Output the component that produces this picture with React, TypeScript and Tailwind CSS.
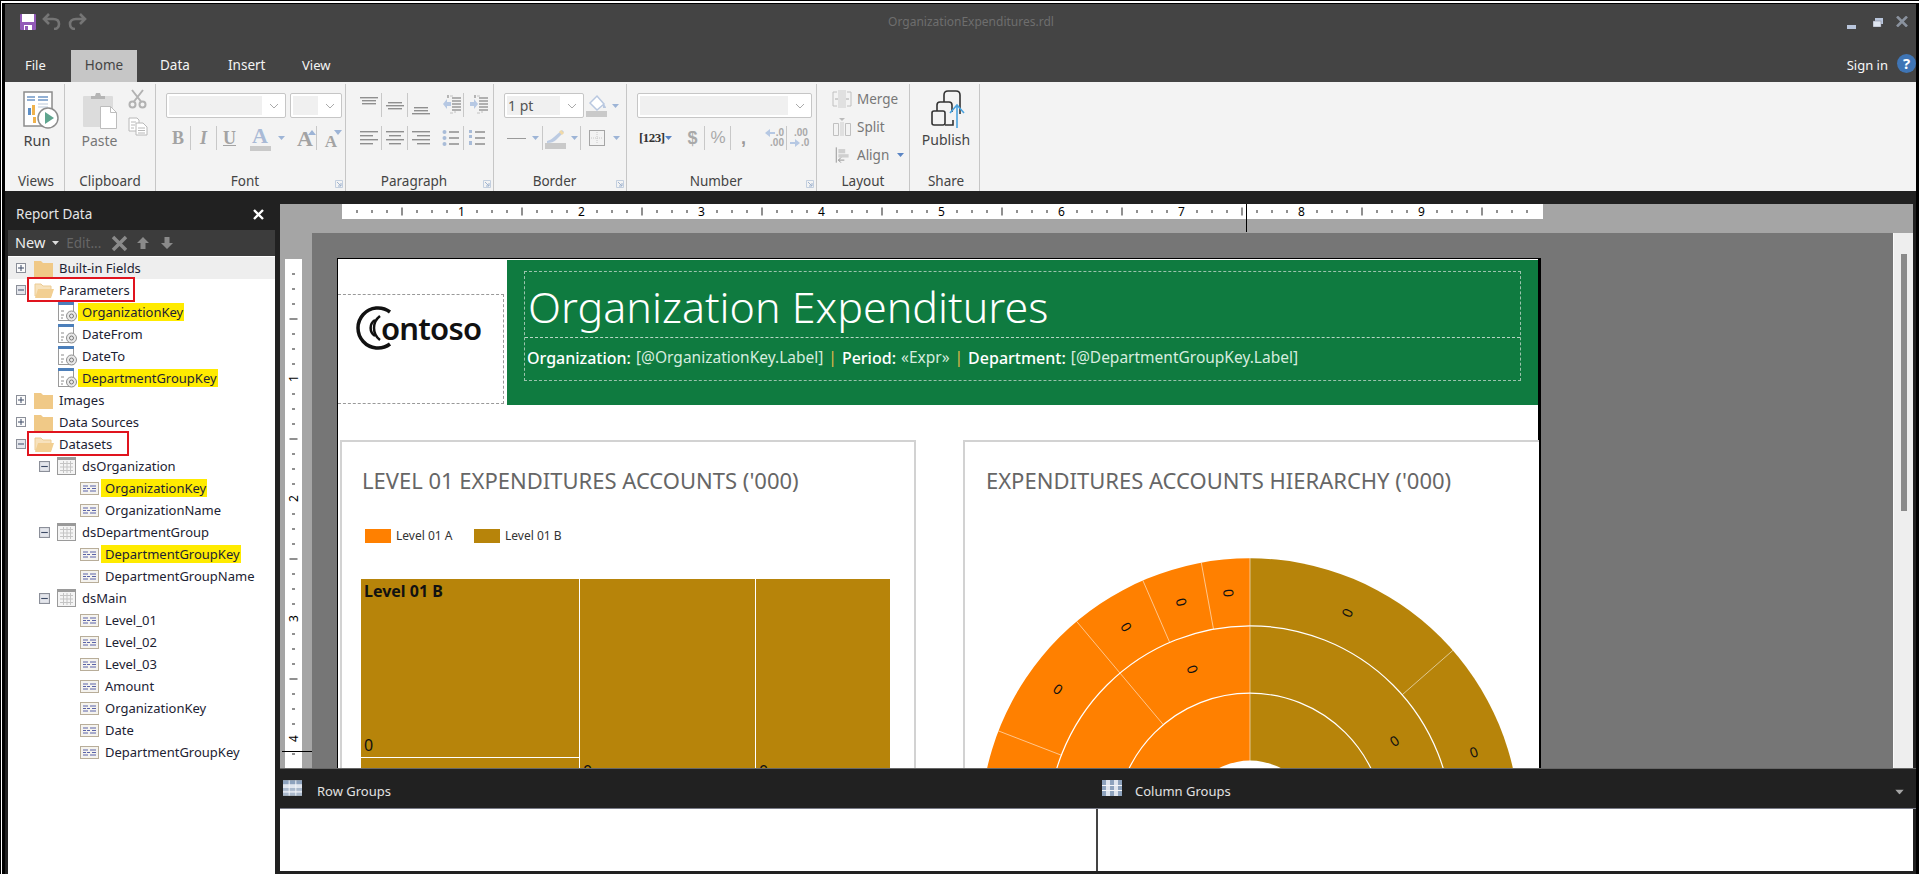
import type { ReactNode } from 'react';

const GRAY = '#8f8f8f';
const BLUE = '#9db4d6';

function Caret({ color = BLUE, className = '' }: { color?: string; className?: string }) {
  return (
    <svg width="7" height="4" viewBox="0 0 7 4" className={className}>
      <path d="M0 0h7L3.5 4z" fill={color} />
    </svg>
  );
}

function Sep({ h = 24 }: { h?: number }) {
  return <div className="w-px shrink-0 bg-[#c8c8c8]" style={{ height: h }} />;
}

// horizontal bars used by all the paragraph glyphs
function Bars({ lines, w = 18, h = 20, color = GRAY }: { lines: [number, number, number][]; w?: number; h?: number; color?: string }) {
  return (
    <svg width={w} height={h} viewBox={`0 0 ${w} ${h}`} className="shrink-0">
      {lines.map(([x1, x2, y], i) => (
        <rect key={i} x={x1} y={y} width={x2 - x1} height="1.4" fill={color} />
      ))}
    </svg>
  );
}

function Combo({ w, inner, children }: { w: number; inner: number; children?: ReactNode }) {
  return (
    <div className="flex h-[25px] items-center rounded-[2px] border border-[#c6c6c6] bg-white pl-[2px]" style={{ width: w }}>
      <div className="flex h-[19px] items-center bg-[#f0f0f0] pl-[1px] text-[14px] leading-none text-[#555]" style={{ width: inner }}>
        {children}
      </div>
      <svg width="10" height="6" viewBox="0 0 10 6" className="ml-auto mr-[6px]">
        <path d="M1 1l4 4 4-4" fill="none" stroke="#aaa" />
      </svg>
    </div>
  );
}

function RibbonGroup({ w, label, launcher, labelClass = '', children }: { w: number; label: string; launcher?: boolean; labelClass?: string; children: ReactNode }) {
  return (
    <div className="relative flex h-full shrink-0 flex-col border-r border-[#c6c6c6]" style={{ width: w }}>
      <div className="h-[87px] shrink-0">{children}</div>
      <div className={`text-center text-[13.5px] leading-[20px] text-[#444] ${launcher ? 'pr-[11px]' : ''} ${labelClass}`}>{label}</div>
      {launcher && (
        <svg width="8" height="8" viewBox="0 0 8 8" className="absolute bottom-[3px] right-[2px]">
          <path d="M0.5 0.5h7v7h-7z" fill="none" stroke="#c3cfdf" />
          <path d="M2 2l4 4M6 3v3H3" fill="none" stroke="#9fb3cf" />
        </svg>
      )}
    </div>
  );
}

function RunIcon() {
  return (
    <svg width="36" height="39" viewBox="0 0 36 39">
      <rect x="1" y="1" width="28" height="34" fill="#fff" stroke="#8c8c8c" strokeWidth="1.5" />
      <path d="M4 6h8M4 9h8M15 6h10M15 9h10" stroke="#6f97c6" strokeWidth="1.4" />
      <path d="M15 13h10M15 16h10" stroke="#b9c8da" strokeWidth="1.2" />
      <rect x="5" y="17" width="3" height="7" fill="#5d8fc7" />
      <rect x="9" y="14" width="3" height="10" fill="#efb24c" />
      <rect x="10" y="26" width="3" height="6" fill="#efb24c" />
      <circle cx="25" cy="27" r="10" fill="#fff" stroke="#8c8c8c" strokeWidth="1.5" />
      <path d="M22 21l9 6-9 6z" fill="#5ea58f" />
    </svg>
  );
}

function PasteIcon() {
  return (
    <svg width="36" height="38" viewBox="0 0 36 38">
      <rect x="1" y="4" width="30" height="31" rx="1" fill="#dcdcdc" />
      <path d="M9 7V4h4l1-3h4l1 3h4v3z" fill="#b5b5b5" />
      <path d="M18.5 14.5h10l6 6v16h-16z" fill="#fff" stroke="#bdbdbd" />
      <path d="M28.5 14.5v6h6" fill="none" stroke="#bdbdbd" />
    </svg>
  );
}

function ScissorsIcon() {
  return (
    <svg width="19" height="20" viewBox="0 0 19 20" fill="none" stroke="#b2b2b2" strokeWidth="2">
      <circle cx="4.5" cy="15.5" r="3" />
      <circle cx="14.5" cy="15.5" r="3" />
      <path d="M6 12.5L15 1M13 12.5L4 1" />
    </svg>
  );
}

function CopyIcon() {
  return (
    <svg width="20" height="19" viewBox="0 0 20 19" fill="#fff" stroke="#b8b8b8">
      <path d="M1 1h8l2 2v11H1z" />
      <path d="M8 6h7l4 4v8H8z" />
      <path d="M3 5h5M3 8h4M3 11h3M10 11h7M10 13.500h7M10 16h7" />
    </svg>
  );
}

function FontA({ size, dir }: { size: number; dir: 'up' | 'down' }) {
  return (
    <div className="relative flex h-[24px] w-[22px] items-end justify-center">
      <span className="font-['Liberation_Serif',serif] font-bold leading-none text-[#a3a3a3]" style={{ fontSize: size }}>
        A
      </span>
      <svg width="8" height="5" viewBox="0 0 8 5" className="absolute right-0 top-[4px]">
        <path d={dir === 'up' ? 'M0 5h8L4 0z' : 'M0 0h8L4 5z'} fill={BLUE} />
      </svg>
    </div>
  );
}

const alignTop: [number, number, number][] = [[0, 18, 2], [2, 16, 5], [2, 16, 8]];
const alignMid: [number, number, number][] = [[2, 16, 7], [0, 18, 10], [2, 16, 13]];
const alignBot: [number, number, number][] = [[2, 16, 12], [2, 16, 15], [0, 18, 18]];
const left: [number, number, number][] = [[0, 18, 3], [0, 13, 7], [0, 18, 11], [0, 13, 15]];
const center: [number, number, number][] = [[0, 18, 3], [3, 15, 7], [0, 18, 11], [3, 15, 15]];
const right: [number, number, number][] = [[0, 18, 3], [5, 18, 7], [0, 18, 11], [5, 18, 15]];

function IndentIcon({ flip }: { flip?: boolean }) {
  return (
    <svg width="20" height="20" viewBox="0 0 20 20">
      <path d={flip ? 'M1 7h4V4l4 5-4 5v-3H1z' : 'M9 7H5V4L1 9l4 5v-3h4z'} fill="#b6c8e3" />
      <path d="M10 3h9M6 0v3M10 6h9M10 9h9M10 12h9M10 15h9" stroke="#9a9a9a" strokeWidth="1.4" />
      <path d="M8 1h3M8 18h3M13 18v-2" stroke="#c2c2c2" />
    </svg>
  );
}

function BulletIcon() {
  return (
    <svg width="18" height="20" viewBox="0 0 18 20">
      <circle cx="2.500" cy="4" r="2" fill="#a9bcd8" />
      <circle cx="2.500" cy="10" r="2" fill="#a9bcd8" />
      <circle cx="2.500" cy="16" r="2" fill="#a9bcd8" />
      <path d="M7 4h10M7 10h10M7 16h10" stroke="#8f8f8f" strokeWidth="1.4" />
    </svg>
  );
}

function NumberedIcon() {
  return (
    <svg width="18" height="20" viewBox="0 0 18 20">
      <path d="M1 2h3v3H1zM1 7h3v3H1zM1 13h3v4H1z" fill="#a9bcd8" />
      <path d="M7 4h10M7 10h10M7 16h10" stroke="#8f8f8f" strokeWidth="1.4" />
    </svg>
  );
}

function SmallArrow({ flip }: { flip?: boolean }) {
  return (
    <svg width="10" height="8" viewBox="0 0 10 8" className="shrink-0">
      <path d={flip ? 'M0 3h5V0l5 4-5 4V5H0z' : 'M10 3H5V0L0 4l5 4V5h5z'} fill="#b6c8e3" />
    </svg>
  );
}

function Ribbon() {
  return (
    <div className="flex h-[109px] shrink-0 bg-[#f3f3f3] pt-[2px]">
      <RibbonGroup w={60} label="Views" labelClass="pl-[3px]">
        <div className="flex flex-col items-center pl-[5px] pt-[7px]">
          <div className="ml-[7px]">
            <RunIcon />
          </div>
          <span className="text-[14.500px] leading-[20px] text-[#444]">Run</span>
        </div>
      </RibbonGroup>
      <RibbonGroup w={91} label="Clipboard">
        <div className="flex pl-[16px] pt-[5px]">
          <div className="flex w-[37px] flex-col items-center pt-[3px]">
            <PasteIcon />
            <span className="mt-px text-[14px] leading-[20px] text-[#777]">Paste</span>
          </div>
          <div className="ml-[10px] flex flex-col gap-[8px]">
            <ScissorsIcon />
            <CopyIcon />
          </div>
        </div>
      </RibbonGroup>
      <RibbonGroup w={190} label="Font" launcher>
        <div className="pl-[10px] pt-[9px]">
          <div className="flex gap-[4px]">
            <Combo w={120} inner={93} />
            <Combo w={52} inner={25} />
          </div>
          <div className="mt-[8px] flex h-[24px] items-center font-['Liberation_Serif',serif] text-[18px] font-bold text-[#a3a3a3]">
            <span className="w-[24px] text-center">B</span>
            <Sep />
            <span className="w-[25px] text-center italic">I</span>
            <Sep />
            <span className="w-[25px] text-center underline">U</span>
            <div className="ml-[2px] flex w-[32px] flex-col items-center">
              <span className="text-[22px] leading-[20px] text-[#a9bad6]">A</span>
              <div className="h-[5px] w-[21px] bg-[#c9c9c9]" />
            </div>
            <Caret className="ml-[2px]" />
            <div className="ml-[9px]">
              <FontA size={22} dir="up" />
            </div>
            <Sep />
            <div className="ml-[3px]">
              <FontA size={17} dir="down" />
            </div>
          </div>
        </div>
      </RibbonGroup>
      <RibbonGroup w={148} label="Paragraph" launcher>
        <div className="flex flex-col gap-[13px] pl-[14px] pt-[11px]">
          <div className="flex h-[20px] items-center">
            <Bars lines={alignTop} />
            <div className="ml-[3px] mr-[4px]"><Sep /></div>
            <Bars lines={alignMid} />
            <div className="ml-[3px] mr-[4px]"><Sep /></div>
            <Bars lines={alignBot} />
            <div className="ml-[12px]"><IndentIcon /></div>
            <div className="ml-[1px] mr-[5px]"><Sep /></div>
            <IndentIcon flip />
          </div>
          <div className="flex h-[20px] items-center">
            <Bars lines={left} />
            <div className="ml-[3px] mr-[4px]"><Sep /></div>
            <Bars lines={center} />
            <div className="ml-[3px] mr-[4px]"><Sep /></div>
            <Bars lines={right} />
            <div className="ml-[12px]"><BulletIcon /></div>
            <div className="ml-[3px] mr-[4px]"><Sep /></div>
            <NumberedIcon />
          </div>
        </div>
      </RibbonGroup>
      <RibbonGroup w={133} label="Border" launcher>
        <div className="pl-[10px] pt-[9px]">
          <div className="flex items-center">
            <Combo w={80} inner={53}>1 pt</Combo>
            <svg width="21" height="23" viewBox="0 0 21 23" className="ml-[2px]">
              <path d="M4 9l7-7 7 8-7 6z" fill="#fff" stroke="#b9c8e0" strokeWidth="1.5" />
              <path d="M17 9c2 2 3 4 3 5h-3z" fill="#b9c8e0" />
              <rect y="17" width="21" height="6" fill="#c9c9c9" />
            </svg>
            <Caret className="ml-[5px]" />
          </div>
          <div className="mt-[8px] flex h-[24px] items-center">
            <div className="ml-[3px] h-px w-[19px] bg-[#9a9a9a]" />
            <Caret className="ml-[6px]" />
            <div className="ml-[3px]"><Sep /></div>
            <svg width="21" height="21" viewBox="0 0 21 21" className="ml-[2px]">
              <path d="M2 13c3-1 5-2 7-4l8-7 2 2-8 8c-2 2-5 3-9 3z" fill="#bccbe2" />
              <path d="M15 3l3 3" stroke="#f0d9a8" strokeWidth="3" />
              <rect y="15" width="21" height="6" fill="#c9c9c9" />
            </svg>
            <Caret className="ml-[5px]" />
            <div className="ml-[2px]"><Sep /></div>
            <svg width="16" height="16" viewBox="0 0 16 16" className="ml-[8px]">
              <rect x="0.5" y="0.5" width="15" height="15" fill="none" stroke="#a5a5a5" />
              <path d="M8 2v12M2 8h12" stroke="#c8c8c8" strokeDasharray="1 1" />
            </svg>
            <Caret className="ml-[8px]" />
          </div>
        </div>
      </RibbonGroup>
      <RibbonGroup w={190} label="Number" launcher>
        <div className="pl-[10px] pt-[9px]">
          <Combo w={175} inner={148} />
          <div className="mt-[8px] flex h-[24px] items-center font-['Liberation_Sans',sans-serif] text-[#a9a9a9]">
            <span className="ml-[2px] w-[24px] text-center font-['Liberation_Serif',serif] text-[13px] font-bold leading-[16px] tracking-[-0.5px] text-[#333]">[123]</span>
            <Caret color="#5a85c4" className="ml-[2px]" />
            <span className="ml-[15px] w-[11px] text-center text-[18px] font-bold">$</span>
            <div className="ml-[6px]"><Sep /></div>
            <span className="ml-[5px] w-[16px] text-center text-[17px]">%</span>
            <div className="ml-[4px]"><Sep /></div>
            <span className="ml-[10px] w-[7px] text-[18px] font-bold leading-[14px] text-[#999]">,</span>
            <div className="ml-[16px] w-[20px] text-right text-[10px] font-bold leading-[10px]">
              <div className="flex items-center justify-end gap-px"><SmallArrow /><span>.0</span></div>
              <div>.00</div>
            </div>
            <div className="ml-[2px]"><Sep /></div>
            <div className="ml-[3px] w-[20px] text-[10px] font-bold leading-[10px]">
              <div className="pl-[4px]">.00</div>
              <div className="flex items-center gap-px"><SmallArrow flip /><span>.0</span></div>
            </div>
          </div>
        </div>
      </RibbonGroup>
      <RibbonGroup w={93} label="Layout">
        <div className="flex flex-col pl-[15px] pt-px text-[13.500px] text-[#777]">
          <div className="flex h-[28px] items-center gap-[5px]">
            <svg width="20" height="20" viewBox="0 0 20 20">
              <rect x="6" y="1" width="8" height="18" fill="#e0e0e0" />
              <path d="M5 3H1v14h4M15 3h4v14h-4" fill="none" stroke="#c0c0c0" />
              <path d="M3 10h3M14 10h3" stroke="#aaa" />
            </svg>
            <span>Merge</span>
          </div>
          <div className="flex h-[28px] items-center gap-[5px]">
            <svg width="20" height="20" viewBox="0 0 20 20">
              <path d="M1.500 6.500h5v12h-5zM13.500 6.500h5v12h-5z" fill="none" stroke="#c0c0c0" />
              <rect x="8" y="5" width="4" height="14" fill="#e0e0e0" />
              <path d="M7 1h6l-3 3z" fill="#bbb" />
            </svg>
            <span>Split</span>
          </div>
          <div className="flex h-[28px] items-center gap-[5px]">
            <svg width="20" height="20" viewBox="0 0 20 20" className="pl-[3px]">
              <path d="M1.500 1v18" stroke="#888" />
              <rect x="4" y="3" width="8" height="5" fill="#cfcfcf" />
              <rect x="4" y="9" width="12" height="4" fill="#cfcfcf" />
              <path d="M11 16H4m3-3l-3 3 3 3" fill="none" stroke="#888" />
            </svg>
            <span>Align</span>
            <Caret color="#5a85c4" className="ml-[3px]" />
          </div>
        </div>
      </RibbonGroup>
      <RibbonGroup w={70} label="Share" labelClass="pl-[3px]">
        <div className="flex flex-col items-center pl-[3px] pt-[6px]">
          <svg width="36" height="39" viewBox="0 0 36 39" fill="none" stroke="#333" strokeWidth="1.6" className="ml-[5px]">
            <path d="M13 12V5q0-4 4-4h8q4 0 4 4v19" />
            <path d="M6 21V15q0-3 3-3h9q3 0 3 3v7" />
            <rect x="1" y="21" width="13" height="14" rx="2" />
            <path d="M14 35h8V30" />
            <path d="M26 38V15M19 23l7-8 7 8" stroke="#4aa3df" />
          </svg>
          <span className="mt-px text-[14px] leading-[20px] text-[#444]">Publish</span>
        </div>
      </RibbonGroup>
    </div>
  );
}

function TitleBar() {
  return (
    <div className="h-[78px] shrink-0 bg-[#444444]">
      <div className="flex h-[46px] items-start">
        <div className="ml-[15px] mt-[9px] flex items-center gap-[6px]">
          <svg width="16" height="16" viewBox="0 0 16 16">
            <rect width="16" height="16" rx="1" fill="#9259b8" />
            <rect x="2" y="0" width="12" height="8" fill="#fff" />
            <rect x="4" y="11" width="8" height="5" fill="#fff" />
            <rect x="5" y="12" width="3" height="4" fill="#9259b8" />
          </svg>
          <svg width="19" height="17" viewBox="0 0 19 17" fill="none" stroke="#757575" strokeWidth="2.6">
            <path d="M7 1L2 6l5 5M2 6h9c4 0 6 2 6 5s-2 5-5 5" />
          </svg>
          <svg width="19" height="17" viewBox="0 0 19 17" fill="none" stroke="#757575" strokeWidth="2.6" className="ml-[1px]">
            <path d="M12 1l5 5-5 5M17 6H8c-4 0-6 2-6 5s2 5 5 5" />
          </svg>
        </div>
        <div className="flex-1 pl-[8px] pt-[10px] text-center text-[12px] leading-[16px] text-[#6e6e6e]">OrganizationExpenditures.rdl</div>
        <div className="mr-[8px] mt-[12px] flex items-start">
          <div className="mt-[9px] h-[4px] w-[9px] bg-[#b9c6dc]" />
          <svg width="10" height="9" viewBox="0 0 10 9" className="ml-[17px] mt-[2px]">
            <rect x="2" width="8" height="6" fill="#b9c6dc" />
            <rect y="3" width="8" height="6" fill="#dfe6f0" stroke="#778" strokeWidth="0.5" />
          </svg>
          <svg width="12" height="11" viewBox="0 0 12 11" className="ml-[13px]">
            <path d="M1 0.500l10 10M11 0.500l-10 10" stroke="#8a929e" strokeWidth="2.600" />
          </svg>
        </div>
      </div>
      <div className="flex h-[32px] text-[13.500px] leading-[30px] text-[#f4f4f4]">
        <span className="ml-[20px] w-[46px] text-[13px]">File</span>
        <span className="w-[66px] bg-[#c6c6c6] text-center text-[#444]">Home</span>
        <span className="ml-[23px] w-[68px]">Data</span>
        <span className="w-[74px]">Insert</span>
        <span className="text-[13px]">View</span>
        <span className="ml-auto text-[13px] text-[#f8f8f8]">Sign in</span>
        <div className="ml-[9px] mt-[4px] flex h-[19px] w-[19px] items-center justify-center rounded-full bg-[#3f75b5] text-[15px] font-bold leading-none text-white">?</div>
      </div>
    </div>
  );
}

function Expander({ open, size = 10 }: { open?: boolean; size?: number }) {
  return (
    <svg width={size} height={size} viewBox="0 0 10 10" className="shrink-0">
      <rect x="0.500" y="0.500" width="9" height="9" fill={open ? '#e4e6ec' : '#fbfbfb'} stroke="#8b8f99" />
      <path d={open ? 'M2 5h6' : 'M2 5h6M5 2v6'} stroke="#3d4b66" />
    </svg>
  );
}

function FolderIcon({ open }: { open?: boolean }) {
  if (open) {
    return (
      <svg width="20" height="18" viewBox="0 0 20 18" className="shrink-0">
        <path d="M1 3h6l2 2h8v10H1z" fill="#f7e2bd" stroke="#eccb94" />
        <path d="M4 8h16l-3 9H1z" fill="#f2cf92" />
      </svg>
    );
  }
  return (
    <svg width="19" height="18" viewBox="0 0 19 18" className="shrink-0">
      <path d="M0 2h7l2 2h10v14H0z" fill="#f0c987" />
    </svg>
  );
}

function ParamIcon() {
  return (
    <svg width="19" height="20" viewBox="0 0 19 20" className="shrink-0">
      <rect x="0.500" y="0.500" width="15" height="18" fill="#fff" stroke="#9a9a9a" />
      <rect x="0" y="0" width="16" height="3" fill="#4c7fba" />
      <path d="M3 9h3M3 13h3M3 16h2" stroke="#8a8a8a" />
      <circle cx="13.500" cy="14" r="5" fill="#e8e8e8" stroke="#8f8f8f" />
      <circle cx="13.500" cy="14" r="2" fill="none" stroke="#777" />
    </svg>
  );
}

function FieldIcon() {
  return (
    <svg width="19" height="13" viewBox="0 0 19 13" className="shrink-0">
      <rect x="0.500" y="0.500" width="18" height="12" fill="#f5f3ee" stroke="#b8ad99" />
      <path d="M3 4h5M10 4h6M3 6.500h3M7 6.500h3M12 6.500h4M3 9h5M10 9h6" stroke="#5b63a8" />
    </svg>
  );
}

function TableIcon() {
  return (
    <svg width="19" height="18" viewBox="0 0 19 18" className="shrink-0">
      <rect width="19" height="18" fill="#9a9a9a" />
      <rect x="1" y="3" width="17" height="14" fill="#f4f4f4" />
      <path d="M3 6.500h13M3 10h13M3 13.500h13M6.500 4v12M10 4v12M13.500 4v12" stroke="#c4c4c4" />
    </svg>
  );
}

type TreeNode = { kind: 'folder' | 'param' | 'dataset' | 'field'; label: string; open?: boolean; mark?: boolean; box?: number; hover?: boolean };

const tree: TreeNode[] = [
  { kind: 'folder', label: 'Built-in Fields', hover: true },
  { kind: 'folder', label: 'Parameters', open: true, box: 108 },
  { kind: 'param', label: 'OrganizationKey', mark: true },
  { kind: 'param', label: 'DateFrom' },
  { kind: 'param', label: 'DateTo' },
  { kind: 'param', label: 'DepartmentGroupKey', mark: true },
  { kind: 'folder', label: 'Images' },
  { kind: 'folder', label: 'Data Sources' },
  { kind: 'folder', label: 'Datasets', open: true, box: 102 },
  { kind: 'dataset', label: 'dsOrganization' },
  { kind: 'field', label: 'OrganizationKey', mark: true },
  { kind: 'field', label: 'OrganizationName' },
  { kind: 'dataset', label: 'dsDepartmentGroup' },
  { kind: 'field', label: 'DepartmentGroupKey', mark: true },
  { kind: 'field', label: 'DepartmentGroupName' },
  { kind: 'dataset', label: 'dsMain' },
  { kind: 'field', label: 'Level_01' },
  { kind: 'field', label: 'Level_02' },
  { kind: 'field', label: 'Level_03' },
  { kind: 'field', label: 'Amount' },
  { kind: 'field', label: 'OrganizationKey' },
  { kind: 'field', label: 'Date' },
  { kind: 'field', label: 'DepartmentGroupKey' },
];

function TreeRow({ node }: { node: TreeNode }) {
  const text = node.mark ? (
    <span className="-ml-[4px] bg-[#ffeb00] pl-[4px] pr-[1px] leading-[15px]">{node.label}</span>
  ) : (
    node.label
  );
  return (
    <div className={`relative flex h-[22px] items-center text-[13px] text-[#1c2233] ${node.hover ? 'bg-[#eeeeee]' : ''}`}>
      {node.kind === 'folder' && (
        <>
          <div className="ml-[8px]"><Expander open={node.open} /></div>
          <div className="ml-[8px]"><FolderIcon open={node.open} /></div>
          <span className={`pt-[2px] ${node.open ? 'ml-[5px]' : 'ml-[6px]'}`}>{text}</span>
        </>
      )}
      {node.kind === 'param' && (
        <>
          <div className="ml-[50px]"><ParamIcon /></div>
          <span className="ml-[5px] pt-[2px]">{text}</span>
        </>
      )}
      {node.kind === 'dataset' && (
        <>
          <div className="ml-[31px]"><Expander open size={11} /></div>
          <div className="ml-[7px]"><TableIcon /></div>
          <span className="ml-[6px] pt-[2px]">{text}</span>
        </>
      )}
      {node.kind === 'field' && (
        <>
          <div className="ml-[72px]"><FieldIcon /></div>
          <span className="ml-[6px] pt-[2px]">{text}</span>
        </>
      )}
      {node.box && (
        <div className="absolute -top-[2px] left-[19px] h-[25px] border-2 border-[#e0141e]" style={{ width: node.box }} />
      )}
    </div>
  );
}

function ReportDataPanel() {
  return (
    <div className="flex w-[275px] shrink-0 flex-col pl-[3px] pr-[5px]">
      <div className="flex h-[39px] shrink-0 items-center justify-between pl-[8px] pr-[11px] pt-[7px] text-[13.500px] text-[#e6e6e6]">
        <span>Report Data</span>
        <svg width="11" height="11" viewBox="0 0 11 11">
          <path d="M1 1l9 9M10 1l-9 9" stroke="#fff" strokeWidth="2.400" />
        </svg>
      </div>
      <div className="flex h-[26px] shrink-0 items-center bg-[#3c3c3c] pl-[7px] text-[#eeeeee]">
        <span className="text-[14.500px]">New</span>
        <Caret color="#ddd" className="ml-[7px]" />
        <span className="ml-[7px] text-[13.500px] text-[#666]">Edit...</span>
        <svg width="17" height="17" viewBox="0 0 17 17" className="ml-[10px]">
          <path d="M2 2l13 13M15 2L2 15" stroke="#8a8a8a" strokeWidth="3.500" />
        </svg>
        <svg width="14" height="14" viewBox="0 0 14 14" className="ml-[8px]">
          <path d="M7 1l6 6H9.500v6h-5V7H1z" fill="#8a8a8a" />
        </svg>
        <svg width="14" height="14" viewBox="0 0 14 14" className="ml-[10px]">
          <path d="M7 13l6-6H9.500V1h-5v6H1z" fill="#8a8a8a" />
        </svg>
      </div>
      <div className="min-h-0 flex-1 bg-white pt-px">
        {tree.map((node, i) => (
          <TreeRow key={i} node={node} />
        ))}
      </div>
    </div>
  );
}

function HorizontalRuler() {
  const ticks = Array.from({ length: 80 }, (_, i) => i);
  return (
    <svg width="1201" height="15" viewBox="0 0 1201 15" className="block bg-white">
      {ticks.map(i => {
        const x = i * 15 - 0.5;
        if (i % 8 === 0) {
          return i === 0 ? null : (
            <text key={i} x={x} y="12" textAnchor="middle" fontSize="12" fill="#000" fontFamily="Noto Sans, sans-serif">
              {i / 8}
            </text>
          );
        }
        const h = i % 4 === 0 ? 8 : 3;
        return <rect key={i} x={x} y={(15 - h) / 2} width="1" height={h} fill="#222" />;
      })}
    </svg>
  );
}

function VerticalRuler() {
  const ticks = Array.from({ length: 33 }, (_, i) => i + 1);
  return (
    <svg width="17" height="509" viewBox="0 0 17 509" className="block bg-white">
      {ticks.map(i => {
        const y = i * 15 - 0.5;
        if (i % 8 === 0) {
          return (
            <text key={i} x="0" y="0" textAnchor="middle" fontSize="12" fill="#000" fontFamily="Noto Sans, sans-serif" transform={`translate(13 ${y}) rotate(-90)`}>
              {i / 8}
            </text>
          );
        }
        const w = i % 4 === 0 ? 8 : 3;
        return <rect key={i} x={(17 - w) / 2} y={y} width={w} height="1" fill="#222" />;
      })}
    </svg>
  );
}

function polar(r: number, deg: number) {
  const a = (deg * Math.PI) / 180;
  return [270 + r * Math.sin(a), 270 - r * Math.cos(a)];
}

function Spoke({ r0, r1, deg }: { r0: number; r1: number; deg: number }) {
  const [x1, y1] = polar(r0, deg);
  const [x2, y2] = polar(r1, deg);
  return <line x1={x1} y1={y1} x2={x2} y2={y2} stroke="#fff" strokeOpacity="0.55" strokeWidth="1" />;
}

const sunburstLabels: [number, number, number][] = [
  [-21.6, -235, -5],
  [-68.9, -226, -17],
  [-124, -201, -32],
  [-192.2, -138.700, -54],
  [-57.6, -158.700, -20],
  [97.4, -215, 24],
  [144.4, -87, 58],
  [223.800, -75.700, 71],
];

function Sunburst() {
  return (
    <svg width="540" height="540" viewBox="0 0 540 540" className="block">
      <path d="M270 0.300A269.700 269.700 0 0 0 270 539.700z" fill="#ff8000" />
      <path d="M270 0.300A269.700 269.700 0 0 1 270 539.700z" fill="#b7840a" />
      <circle cx="270" cy="270" r="202.200" fill="none" stroke="#fff" strokeWidth="1.200" />
      <circle cx="270" cy="270" r="134.800" fill="none" stroke="#fff" strokeWidth="1.200" />
      <line x1="270" y1="0" x2="270" y2="203" stroke="#fff" strokeOpacity="0.55" />
      <Spoke r0={202.200} r1={269.700} deg={-10.400} />
      <Spoke r0={202.200} r1={269.700} deg={-23.400} />
      <Spoke r0={134.800} r1={269.700} deg={-40} />
      <Spoke r0={202.200} r1={269.700} deg={-68.900} />
      <Spoke r0={202.200} r1={269.700} deg={48.800} />
      <circle cx="270" cy="270" r="67.400" fill="#fff" />
      {sunburstLabels.map(([dx, dy, deg], i) => (
        <text
          key={i}
          x="0"
          y="5"
          textAnchor="middle"
          fontSize="14"
          fill="#111"
          fontFamily="Noto Sans, sans-serif"
          transform={`translate(${270 + dx} ${270 + dy}) rotate(${90 + deg})`}
        >
          0
        </text>
      ))}
    </svg>
  );
}

function ContosoLogo() {
  return (
    <div className="flex items-center pl-[16px] pt-[10px]">
      <svg width="42" height="46" viewBox="0 0 42 46" fill="none" stroke="#111" className="shrink-0">
        <path d="M36 7A20 20 0 1 0 36 39" strokeWidth="3.500" />
        <path d="M30 11A15 15 0 0 0 30 35" strokeWidth="2.500" transform="translate(-4 0)" />
        <path d="M24 15A9.500 9.500 0 0 0 24 31" strokeWidth="2.500" transform="translate(-3 0)" />
      </svg>
      <span className="-ml-[15px] text-[31px] font-semibold leading-none tracking-[-0.8px] text-[#111]">ontoso</span>
    </div>
  );
}

function ReportHeader() {
  return (
    <div className="flex h-[146px] shrink-0">
      <div className="mt-[35px] h-[110px] w-[166px] shrink-0 border-y border-r border-dashed border-[#999]">
        <ContosoLogo />
      </div>
      <div className="ml-[3px] mt-px flex-1 bg-[#0f7b40] pl-[17px] pr-[17px] pt-[11px]">
        <div className="h-[110px] border border-dashed border-[#9cc3ad]">
          <div className="h-[66px] border-b border-dashed border-[#b8d6c5] pl-[3px] pt-[4px] text-[43px] font-light leading-[62px] text-white">
            Organization Expenditures
          </div>
          <div className="flex h-[42px] items-center gap-[5px] pl-[2px] pb-[2px] text-[15.500px] text-[#d6ecdf]">
            <span className="text-[16px] font-medium text-white">Organization:</span>
            <span>[@OrganizationKey.Label]</span>
            <span className="text-[#e0b84a]">|</span>
            <span className="text-[16px] font-medium text-white">Period:</span>
            <span>«Expr»</span>
            <span className="text-[#e0b84a]">|</span>
            <span className="text-[16px] font-medium text-white">Department:</span>
            <span>[@DepartmentGroupKey.Label]</span>
          </div>
        </div>
      </div>
    </div>
  );
}

function ExpendituresCard() {
  return (
    <div className="h-[500px] w-[576px] shrink-0 border-2 border-[#d2d2d2] pl-[19px] pt-[22px]">
      <h2 className="pl-px text-[22px] font-normal leading-[32px] text-[#666]">LEVEL 01 EXPENDITURES ACCOUNTS ('000)</h2>
      <div className="ml-[4px] mt-[33px] flex h-[14px] items-center text-[12px] text-[#333]">
        <div className="h-[14px] w-[26px] bg-[#ff8000]" />
        <span className="ml-[5px] w-[78px]">Level 01 A</span>
        <div className="h-[14px] w-[26px] bg-[#b7840a]" />
        <span className="ml-[5px]">Level 01 B</span>
      </div>
      <div className="mt-[36px] flex h-[300px] w-[529px] bg-[#b7840a] text-[16px] text-[#111]">
        <div className="flex w-[218px] shrink-0 flex-col">
          <div className="flex h-[179px] flex-col justify-between border-b border-white px-[3px]">
            <span className="font-bold leading-[24px]">Level 01 B</span>
            <span className="leading-[24px]">0</span>
          </div>
        </div>
        <div className="w-[176px] shrink-0 border-l border-white pl-[3px] pt-[180px]">0</div>
        <div className="flex-1 border-l border-white pl-[3px] pt-[180px]">0</div>
      </div>
    </div>
  );
}

function HierarchyCard() {
  return (
    <div className="h-[500px] flex-1 border-y-2 border-l-2 border-[#d2d2d2] pl-[15px] pt-[22px]">
      <h2 className="pl-[6px] text-[22px] font-normal leading-[32px] text-[#666]">EXPENDITURES ACCOUNTS HIERARCHY ('000)</h2>
      <div className="mt-[62px]">
        <Sunburst />
      </div>
    </div>
  );
}

function Canvas() {
  return (
    <div className="relative mr-[3px] flex min-h-0 flex-1 flex-col overflow-hidden bg-[#a5a5a5]">
      <div className="h-[29px] shrink-0 pl-[62px]">
        <HorizontalRuler />
      </div>
      <div className="absolute left-[966px] top-0 h-[28px] w-px bg-black" />
      <div className="flex min-h-0 flex-1">
        <div className="w-[32px] shrink-0 pl-[5px] pt-[26px]">
          <VerticalRuler />
        </div>
        <div className="min-w-0 flex-1 overflow-hidden bg-[#767676] pl-[25px] pt-[25px]">
          <div className="h-[700px] w-[1204px] border-l border-t border-r-2 border-black bg-white">
            <div className="border-r border-black">
              <ReportHeader />
              <div className="h-[35px]" />
            </div>
            <div className="flex pl-[2px]">
              <ExpendituresCard />
              <div className="w-[47px] shrink-0" />
              <HierarchyCard />
            </div>
          </div>
        </div>
        <div className="w-[20px] shrink-0 border-l border-[#fafafa] bg-[#eeeeee] pl-[7px] pt-[21px]">
          <div className="h-[257px] w-[6px] bg-[#8a8a8a]" />
        </div>
      </div>
      <div className="absolute left-[2px] top-[547px] h-px w-[30px] bg-black" />
    </div>
  );
}

function GroupsIcon({ wide }: { wide?: boolean }) {
  return (
    <svg width={wide ? 20 : 19} height="16" viewBox="0 0 20 16" className="shrink-0 -translate-y-[4px]">
      <rect width="20" height="16" fill="#dfe5ee" />
      {wide ? (
        <>
          <rect width="4" height="16" fill="#8da2bd" />
          <rect x="8" width="4" height="16" fill="#8da2bd" />
          <rect x="16" width="4" height="16" fill="#8da2bd" />
          <path d="M0 5.500h20M0 10.500h20" stroke="#f3f5f9" />
        </>
      ) : (
        <>
          <rect width="20" height="4" fill="#8da2bd" />
          <rect y="8" width="20" height="3" fill="#aab9cc" />
          <rect y="13" width="20" height="3" fill="#aab9cc" />
          <path d="M6.500 0v16M13.500 0v16" stroke="#f3f5f9" />
        </>
      )}
    </svg>
  );
}

function GroupingPane() {
  return (
    <>
      <div className="flex h-[41px] shrink-0 items-center border-t border-[#666] border-b border-b-[#7a7c88] pr-[8px] pt-[6px] text-[13px] text-[#e2e2e2]">
        <div className="flex w-[816px] shrink-0 items-center pl-[3px]">
          <GroupsIcon />
          <span className="ml-[15px]">Row Groups</span>
        </div>
        <div className="flex flex-1 items-center pl-[6px]">
          <GroupsIcon wide />
          <span className="ml-[13px]">Column Groups</span>
        </div>
        <Caret color="#a5a5a5" className="mr-[5px] scale-125" />
      </div>
      <div className="flex h-[62px] shrink-0 pr-[3px]">
        <div className="w-[816px] shrink-0 bg-white" />
        <div className="w-[2px] shrink-0 bg-[#444]" />
        <div className="flex-1 bg-white" />
      </div>
      <div className="h-[3px] shrink-0" />
    </>
  );
}

export default function App() {
  return (
    <div className="h-[874px] w-[1919px] overflow-hidden bg-black pl-px pt-px font-['Noto_Sans',sans-serif]">
      <div className="flex h-[873px] flex-col border-l border-t-2 border-white pl-[3px] pr-[3px] pt-px">
        <TitleBar />
        <Ribbon />
        <div className="flex min-h-0 flex-1 bg-[#212121]">
          <ReportDataPanel />
          <div className="flex min-w-0 flex-1 flex-col pt-[13px]">
            <Canvas />
            <GroupingPane />
          </div>
        </div>
      </div>
    </div>
  );
}
